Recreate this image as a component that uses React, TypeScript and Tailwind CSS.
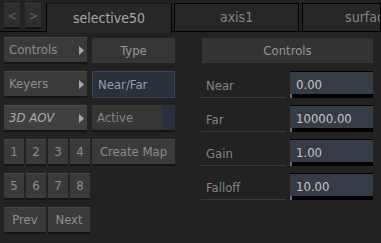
import React from 'react';

const font = { fontFamily: '"DejaVu Sans Condensed", "DejaVu Sans", sans-serif' };

const Btn = ({ children, className = '' }: { children: React.ReactNode; className?: string }) => (
  <div className={`h-[27px] bg-[#3a3a3a] border-t border-t-[#484848] border-b-2 border-b-[#141414] flex items-center text-[13px] text-[#8e8e8e] ${className}`}>
    {children}
  </div>
);

const Arrow = () => (
  <svg width="5" height="9" viewBox="0 0 5 9" className="ml-auto mr-[3px]">
    <path d="M0 0 L5 4.5 L0 9 Z" fill="#a8a8a8" />
  </svg>
);

const Field = ({ label, value }: { label: string; value: string }) => (
  <div className="flex items-end gap-[4px] h-[27px]">
    <div className="w-[85px] h-full flex items-center pl-[5px] border-b border-[#3a3a3a] text-[13px] text-[#858585] pt-[3px]">{label}</div>
    <div className="relative w-[83px] h-[27px] bg-[#353c46] border-t border-black flex items-start pl-[6px] pt-[3px] text-[13px] text-[#c4c4c4]">
      {value}
      <div className="absolute left-0 right-0 bottom-0 h-[4px] bg-black" />
      <div className="absolute left-0 bottom-0 w-[2px] h-[4px] bg-[#6a6a6a]" />
    </div>
  </div>
);

export default function App() {
  return (
    <div className="w-[381px] h-[243px] bg-[#222222] overflow-hidden" style={font}>
      {/* tab bar */}
      <div className="relative h-[33px] flex items-start pt-[3px]">
        <div className="absolute left-0 right-0 top-[31px] h-[1px] bg-black" />
        <div className="ml-[4px] w-[17px] h-[26px] bg-[#2e2e2e] border-t border-[#3c3c3c] border-b-2 border-b-[#141414] flex items-center justify-center text-[12px] text-[#666666]">&lt;</div>
        <div className="ml-[5px] w-[16px] h-[26px] bg-[#2e2e2e] border-t border-[#3c3c3c] border-b-2 border-b-[#141414] flex items-center justify-center text-[12px] text-[#666666]">&gt;</div>
        <div className="relative z-10 ml-[5px] w-[130px] h-[30px] bg-[#272727] border border-black border-b-0 border-t-[#1a1a1a] flex items-center justify-center text-[14px] text-[#a8a8a8]">selective50</div>
        <div className="ml-[2px] w-[129px] h-[29px] bg-[#262626] border border-black flex items-center justify-center text-[14px] text-[#858585]">axis1</div>
        <div className="ml-[3px] w-[80px] h-[29px] bg-[#262626] border border-black flex items-center pl-[42px] text-[14px] text-[#858585] overflow-hidden whitespace-nowrap">surface</div>
      </div>

      <div className="flex pt-[4px]">
        {/* left column */}
        <div className="ml-[4px] w-[171px] flex flex-col gap-[7px]">
          <div className="flex gap-[5px]">
            <Btn className="w-[83px] pl-[5px]">Controls<Arrow /></Btn>
            <div className="w-[83px] h-[25px] mt-[1px] bg-[#363636] flex items-center justify-center text-[13px] text-[#969696]">Type</div>
          </div>
          <div className="flex gap-[5px]">
            <Btn className="w-[83px] pl-[5px]">Keyers<Arrow /></Btn>
            <div className="w-[83px] h-[27px] bg-[#29313d] border border-[#3a4454] flex items-center pl-[5px] text-[13px] text-[#9a9ea4]">Near/Far</div>
          </div>
          <div className="flex gap-[5px]">
            <Btn className="w-[83px] pl-[5px] bg-[#404040] italic text-[#aaaaaa]">3D AOV<Arrow /></Btn>
            <div className="w-[83px] h-[27px] flex border-b-2 border-b-[#141414]">
              <div className="flex-1 bg-[#363636] flex items-center pl-[5px] text-[13px] text-[#858585]">Active</div>
              <div className="w-[13px] bg-[#27303b]" />
            </div>
          </div>
          <div className="flex gap-[2px]">
            <Btn className="w-[20px] justify-center text-[#6f9fd8]">1</Btn>
            <Btn className="w-[20px] justify-center">2</Btn>
            <Btn className="w-[20px] justify-center">3</Btn>
            <Btn className="w-[20px] justify-center">4</Btn>
            <Btn className="w-[83px] justify-center">Create Map</Btn>
          </div>
          <div className="flex gap-[2px]">
            <Btn className="w-[20px] justify-center">5</Btn>
            <Btn className="w-[20px] justify-center">6</Btn>
            <Btn className="w-[20px] justify-center">7</Btn>
            <Btn className="w-[20px] justify-center">8</Btn>
          </div>
          <div className="flex gap-[2px]">
            <Btn className="w-[42px] justify-center">Prev</Btn>
            <Btn className="w-[42px] justify-center">Next</Btn>
          </div>
        </div>

        {/* right panel */}
        <div className="ml-[26px] w-[172px] flex flex-col">
          <div className="ml-[1px] w-[171px] h-[25px] mt-[1px] bg-[#333333] flex items-center justify-center text-[13px] text-[#969696]">Controls</div>
          <div className="flex flex-col gap-[7px] mt-[8px]">
            <Field label="Near" value="0.00" />
            <Field label="Far" value="10000.00" />
            <Field label="Gain" value="1.00" />
            <Field label="Falloff" value="10.00" />
          </div>
        </div>
      </div>
    </div>
  );
}
